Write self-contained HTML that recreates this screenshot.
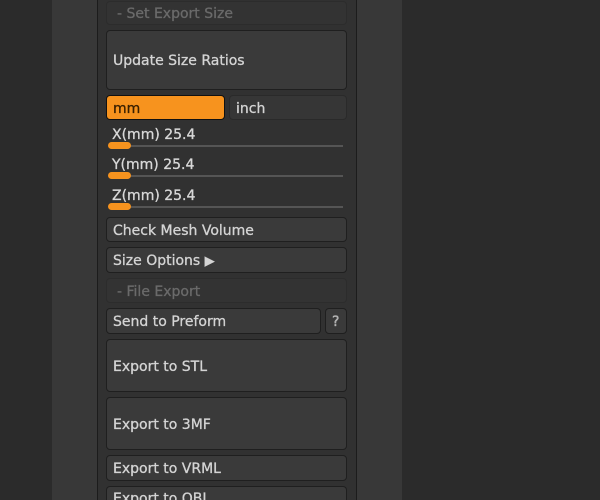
<!DOCTYPE html><html style="height:500px;overflow:hidden"><head><style>
body{margin:0;width:600px;height:500px;overflow:hidden;background:#2b2b2b;font-family:"DejaVu Sans","Liberation Sans",sans-serif;position:relative}
.s{position:absolute;top:0;height:500px}
.b{position:absolute;left:106px;width:241px;background:#3a3a3a;border:1px solid #1f1f1f;border-radius:4px;color:#d4d4d4;font-size:14px;box-sizing:border-box;display:flex;align-items:center;padding-left:6px;padding-top:2px;-webkit-text-stroke:0.3px #d4d4d4}
.h{background:#333;border-color:#2c2c2c;color:#6a6a6a;-webkit-text-stroke:0.3px #6a6a6a}
.l{position:absolute;left:112px;color:#d8d8d8;font-size:14px;-webkit-text-stroke:0.3px #d8d8d8}
.t{position:absolute;left:110px;width:233px;height:2px;background:#555}
.k{position:absolute;left:108px;width:23px;height:7px;background:#f7931e;border-radius:4px}
</style></head><body>
<div class="s" style="left:52px;width:45px;background:#383838"></div>
<div class="s" style="left:97px;width:260px;background:#313131;border-left:1px solid #1c1c1c;border-right:1px solid #1c1c1c;box-sizing:border-box"></div>
<div class="s" style="left:357px;width:45px;background:#383838"></div>
<div class="b h" style="top:1px;height:24px;padding-left:10px">- Set Export Size</div>
<div class="b" style="top:30px;height:60px">Update Size Ratios</div>
<div class="b" style="top:95px;height:25px;width:119px;background:#f7931e;border-color:#111;color:#3a2000;-webkit-text-stroke:0.3px #3a2000">mm</div>
<div class="b" style="top:95px;height:25px;left:229px;width:118px;background:#363636;border-color:#2a2a2a">inch</div>
<div class="l" style="top:127px">X(mm) 25.4</div><div class="t" style="top:145px"></div><div class="k" style="top:142px"></div>
<div class="l" style="top:157px">Y(mm) 25.4</div><div class="t" style="top:175px"></div><div class="k" style="top:172px"></div>
<div class="l" style="top:188px">Z(mm) 25.4</div><div class="t" style="top:206px"></div><div class="k" style="top:203px"></div>
<div class="b" style="top:217px;height:25px">Check Mesh Volume</div>
<div class="b" style="top:247px;height:26px">Size Options&nbsp;<span style="font-size:13px">▶</span></div>
<div class="b h" style="top:278px;height:25px;padding-left:10px">- File Export</div>
<div class="b" style="top:308px;height:26px;width:215px">Send to Preform</div>
<div class="b" style="top:308px;height:26px;left:325px;width:22px;padding-left:6px;color:#aaa">?</div>
<div class="b" style="top:339px;height:53px">Export to STL</div>
<div class="b" style="top:397px;height:53px">Export to 3MF</div>
<div class="b" style="top:455px;height:26px">Export to VRML</div>
<div class="b" style="top:486px;height:14px;border-bottom:none;border-radius:4px 4px 0 0;align-items:flex-start;padding-top:4px;overflow:hidden">Export to OBJ</div>
</body></html>
